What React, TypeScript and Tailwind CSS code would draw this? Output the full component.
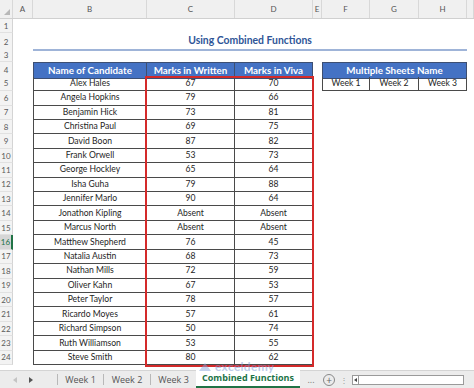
import React from "react";

const rows: [string, string, string][] = [
  ["Alex Hales", "67", "70"],
  ["Angela Hopkins", "79", "66"],
  ["Benjamin Hick", "73", "81"],
  ["Christina Paul", "69", "75"],
  ["David Boon", "87", "82"],
  ["Frank Orwell", "53", "73"],
  ["George Hockley", "65", "64"],
  ["Isha Guha", "79", "88"],
  ["Jennifer Marlo", "90", "64"],
  ["Jonathon Kipling", "Absent", "Absent"],
  ["Marcus North", "Absent", "Absent"],
  ["Matthew Shepherd", "76", "45"],
  ["Natalia Austin", "68", "73"],
  ["Nathan Mills", "72", "59"],
  ["Oliver Kahn", "67", "53"],
  ["Peter Taylor", "78", "57"],
  ["Ricardo Moyes", "57", "61"],
  ["Richard Simpson", "50", "74"],
  ["Ruth Williamson", "53", "55"],
  ["Steve Smith", "80", "62"],
];

const grid =
  "grid grid-cols-[13px_20px_114px_88px_78px_9px_48px_49px_48px_7px] h-[14.43px]";

function RowNum({ n }: { n: number }) {
  const sel = n === 16;
  return (
    <div
      className={`flex items-center justify-center text-[8px] border-r ${
        sel
          ? "bg-[#d6d6d6] text-[#217346] border-r-2 border-[#217346]"
          : "bg-[#f3f3f3] text-[#5a5a5a] border-[#d4d4d4]"
      } border-b border-b-[#e1e1e1]`}
    >
      {n}
    </div>
  );
}

const cell = "flex items-center justify-center border-r border-b border-[#4a4a4a] text-[8.6px] text-[#1e1e1e]";
const head =
  "flex items-center justify-center border-r border-b border-t border-[#3d4f72] bg-[#4472c4] text-white font-bold text-[9.8px]";

export default function App() {
  return (
    <div className="relative w-[474px] h-[388px] overflow-hidden bg-white font-['Lato',sans-serif]">
      {/* column headers */}
      <div className="grid grid-cols-[13px_20px_114px_88px_78px_9px_48px_49px_48px_7px] h-[19px] bg-[#f0f0f0] border-b border-[#d0d0d0] text-[8px] text-[#555]">
        <div className="flex items-end justify-end pr-[2px] pb-[3px] border-r border-[#d8d8d8]">
          <div className="w-0 h-0 border-l-[6px] border-l-transparent border-b-[6px] border-b-[#b8b8b8]" />
        </div>
        {["A", "B", "C", "D", "E", "F", "G", "H", ""].map((c, i) => (
          <div key={i} className="flex items-center justify-center border-r border-[#d8d8d8]">
            {c}
          </div>
        ))}
      </div>

      {/* rows 1-3 */}
      <div className={grid}>
        <RowNum n={1} />
      </div>
      <div className={grid}>
        <RowNum n={2} />
        <div />
        <div className="col-span-7 flex items-center justify-center border-b-2 border-[#9fb4d8] text-[10.4px] font-bold text-[#2e5597]">
          Using Combined Functions
        </div>
      </div>
      <div className={grid}>
        <RowNum n={3} />
      </div>

      {/* row 4 header */}
      <div className={grid}>
        <RowNum n={4} />
        <div />
        <div className={`${head} border-l`}>Name of Candidate</div>
        <div className={head}>Marks in Written</div>
        <div className={head}>Marks in Viva</div>
        <div />
        <div className={`${head} border-l col-span-3`}>Multiple Sheets Name</div>
      </div>

      {rows.map((r, i) => (
        <div key={i} className={grid}>
          <RowNum n={i + 5} />
          <div />
          <div className={`${cell} border-l`}>{r[0]}</div>
          <div className={cell}>{r[1]}</div>
          <div className={cell}>{r[2]}</div>
          {i === 0 && (
            <>
              <div />
              <div className={`${cell} border-l`}>Week 1</div>
              <div className={cell}>Week 2</div>
              <div className={cell}>Week 3</div>
            </>
          )}
        </div>
      ))}

      {/* red highlight around marks */}
      <div className="absolute left-[145px] top-[76px] w-[169px] h-[291px] border-[2.5px] border-[#d42a2a] pointer-events-none" />

      {/* sheet tabs */}
      <div className="absolute left-0 right-0 bottom-0 h-[18px] flex items-stretch bg-[#ececec] border-t border-[#d4d4d4] font-['Open_Sans',sans-serif] text-[9px] text-[#555]">
        <div className="w-[57px] flex items-center gap-[12px] pl-[13px]">
          <div className="w-0 h-0 border-y-[3px] border-y-transparent border-r-[4px] border-r-[#c4c4c4]" />
          <div className="w-0 h-0 border-y-[3px] border-y-transparent border-l-[4px] border-l-[#555]" />
        </div>
        <div className="w-[46px] flex items-center justify-center border-l border-[#b8b8b8] my-[3px]">Week 1</div>
        <div className="w-[47px] flex items-center justify-center border-l border-[#b8b8b8] my-[3px]">Week 2</div>
        <div className="w-[46px] flex items-center justify-center border-l border-[#b8b8b8] my-[3px]">Week 3</div>
        <div className="w-[104px] flex items-center justify-center bg-white text-[#217346] font-bold border-b-2 border-[#217346] -mt-px">
          Combined Functions
        </div>
        <div className="w-[22px] flex items-center justify-center text-[#777]">...</div>
        <div className="w-[14px] flex items-center justify-center">
          <div className="w-[12px] h-[12px] rounded-full border border-[#888] flex items-center justify-center text-[10px] leading-none text-[#666]">
            +
          </div>
        </div>
        <div className="w-[16px] flex items-center justify-center text-[#999] text-[8px]">⋮</div>
        <div className="flex items-center">
          <div className="w-[112px] h-[10px] bg-white border border-[#9a9a9a] flex items-center">
            <div className="w-[6px] h-full border-r border-[#9a9a9a] flex items-center justify-center">
              <div className="w-0 h-0 border-y-[2px] border-y-transparent border-r-[3px] border-r-[#444]" />
            </div>
          </div>
        </div>
      </div>

      {/* watermark */}
      <div className="absolute left-[198px] top-[361px] flex items-center gap-[3px] opacity-50 pointer-events-none">
        <svg width="14" height="10" viewBox="0 0 14 10">
          <path d="M1 9 L7 1 L13 9 Z" fill="#8aa6dc" />
        </svg>
        <span className="text-[12px] font-bold text-[#7f9ad6] tracking-wide leading-none">exceldemy</span>
      </div>
    </div>
  );
}
